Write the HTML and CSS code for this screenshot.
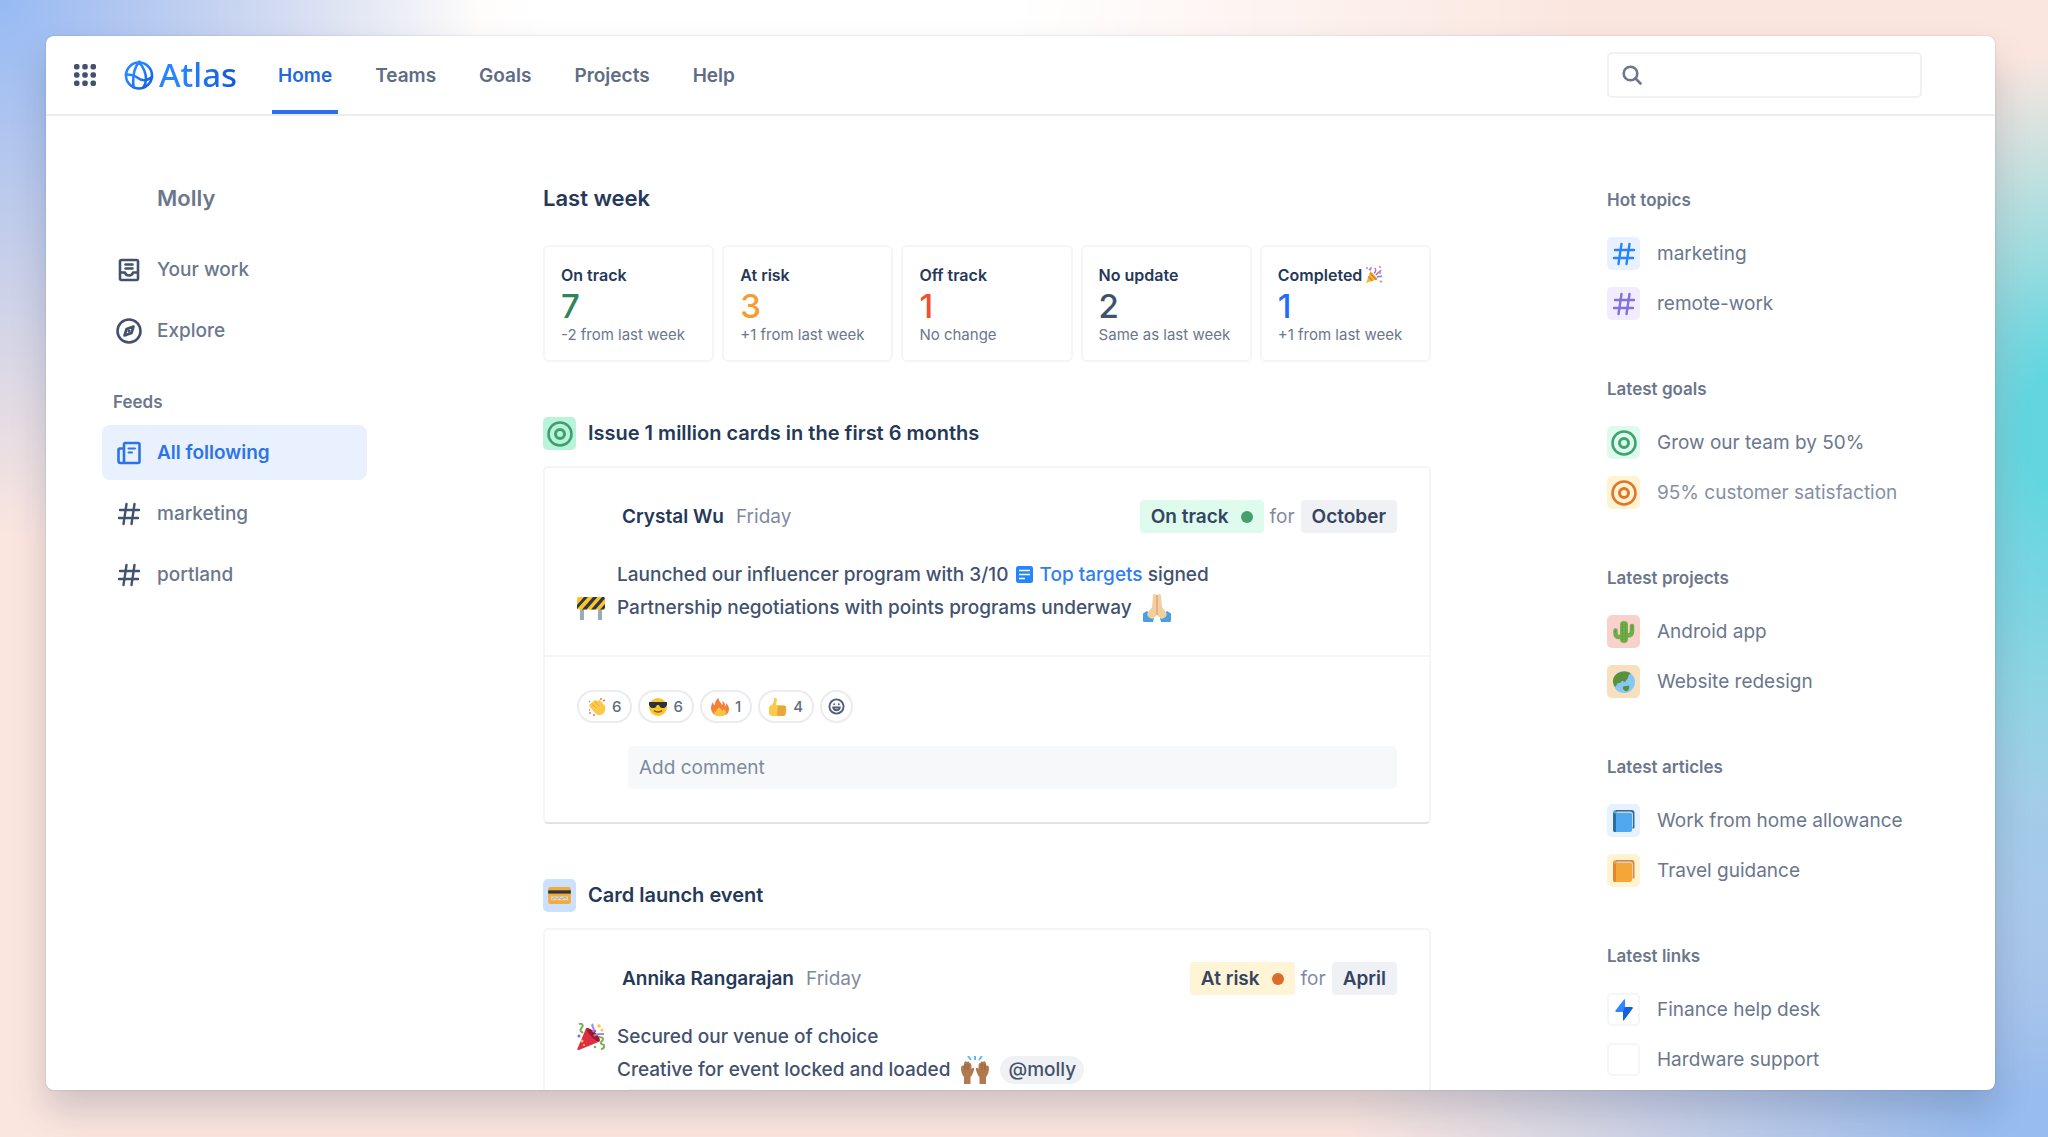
FILE: index.html
```html
<!DOCTYPE html>
<html lang="en">
<head>
    <meta charset="UTF-8">
    <meta name="viewport" content="width=device-width, initial-scale=1.0">
    <title>Atlas - Home</title>
    <link rel="stylesheet" href="styles.css">
</head>
<body>
    <!-- Shared icons -->
    <svg class="sprite" aria-hidden="true">
        <symbol id="icon-hash" viewBox="0 0 24 24">
            <path d="M9.5 2 6.5 22M17.500 2 14.500 22M3 8h19M2 16h19" fill="none" stroke="currentColor" stroke-width="2.4" stroke-linecap="round"/>
        </symbol>
        <symbol id="icon-goal" viewBox="0 0 26 26">
            <circle cx="13" cy="13" r="11.500" fill="none" stroke="currentColor" stroke-width="2.600"/>
            <circle cx="13" cy="13" r="4.500" fill="none" stroke="currentColor" stroke-width="3"/>
        </symbol>
        <symbol id="icon-book" viewBox="0 0 24 24">
            <path d="M4 1h15.500a3 3 0 0 1 3 3v15l-2 1V5H3V2z" fill="var(--cover-dark)"/>
            <path d="M4.500 2.500H18a3 3 0 0 1 3 3v12l-1 .5V5H4z" fill="#c9d3da"/>
            <path d="M1 3.500C1 2 2 1 3.500 1L4 4h14.500A1.500 1.500 0 0 1 20 5.500v15.500a2 2 0 0 1-2 2H3a2 2 0 0 1-2-2z" fill="var(--cover)"/>
            <path d="M1 3c0 1 1 1.500 3 1.500V23H3a2 2 0 0 1-2-2z" fill="var(--cover-dark)"/>
        </symbol>
    </svg>

    <div class="window">
        <header class="topbar">
            <button class="switcher" aria-label="Switch product">
                <svg width="22" height="22" viewBox="0 0 22 22" fill="#42526e">
                    <rect width="5.500" height="5.500" rx="2"/><rect x="8.250" width="5.500" height="5.500" rx="2"/><rect x="16.500" width="5.500" height="5.500" rx="2"/>
                    <rect y="8.250" width="5.500" height="5.500" rx="2"/><rect x="8.250" y="8.250" width="5.500" height="5.500" rx="2"/><rect x="16.500" y="8.250" width="5.500" height="5.500" rx="2"/>
                    <rect y="16.500" width="5.500" height="5.500" rx="2"/><rect x="8.250" y="16.500" width="5.500" height="5.500" rx="2"/><rect x="16.500" y="16.500" width="5.500" height="5.500" rx="2"/>
                </svg>
            </button>
            <a class="logo" href="#">
                <svg width="30" height="30" viewBox="0 0 30 30" fill="none" stroke="url(#logo-blue)" stroke-width="2.600" stroke-linecap="round" stroke-linejoin="round">
                    <defs>
                        <linearGradient id="logo-blue" x1="0" y1="0" x2="30" y2="30" gradientUnits="userSpaceOnUse">
                            <stop offset=".4" stop-color="#2684ff"/><stop offset="1" stop-color="#0f55d0"/>
                        </linearGradient>
                    </defs>
                    <circle cx="15" cy="15.500" r="13"/>
                    <path d="M15 2C10 8 8.500 17 9.500 27M15 2c5 6 7 12 7 17 0 3-1 6-2.500 8M2 14.500c6 0 9 1 12 3.500 4 3 9 3 14-1M14.500 2.500l1-.8"/>
                </svg>
                <span>Atlas</span>
            </a>
            <nav class="tabs">
                <a class="active" href="#">Home</a>
                <a href="#">Teams</a>
                <a href="#">Goals</a>
                <a href="#">Projects</a>
                <a href="#">Help</a>
            </nav>
            <label class="search">
                <svg width="20" height="20" viewBox="0 0 20 20" fill="none" stroke="#6b778c" stroke-width="2.600" stroke-linecap="round"><circle cx="8.500" cy="8.500" r="6.800"/><path d="m13.500 13.500 5 5"/></svg>
                <input type="search" aria-label="Search">
            </label>
        </header>

        <div class="content">
            <aside class="sidebar">
                <h2>Molly</h2>
                <a class="side-link" href="#">
                    <svg width="26" height="26" viewBox="0 0 26 26" fill="none" stroke="currentColor" stroke-width="2.600" stroke-linecap="round" stroke-linejoin="round"><rect x="4" y="3" width="18" height="20" rx="1.500"/><path d="M4.500 15.500H9c.5 2 2 3 4 3s3.500-1 4-3h4.500M9.500 7.500h7M9.500 11.500h7"/></svg>
                    Your work
                </a>
                <a class="side-link" href="#">
                    <svg width="26" height="26" viewBox="0 0 26 26" fill="none" stroke="currentColor" stroke-width="2.600" stroke-linejoin="round"><circle cx="13" cy="13" r="11.500"/><path d="m17.500 8.500-2 6.500-7 2.500 2-6.500z"/><path d="m14 12-2 2"/></svg>
                    Explore
                </a>
                <h3>Feeds</h3>
                <a class="side-link selected" href="#">
                    <svg width="26" height="26" viewBox="0 0 26 26" fill="none" stroke="currentColor" stroke-width="2.600" stroke-linecap="round" stroke-linejoin="round"><path d="M9 3h13a1.500 1.500 0 0 1 1.500 1.500v17A1.500 1.500 0 0 1 22 23H4.500A2 2 0 0 1 2.500 21V10A1.500 1.500 0 0 1 4 8.500h4M8 23V4.500A1.500 1.500 0 0 1 9.500 3"/><path d="M12.500 8.500h6.500M12.500 12.500h3.500" stroke-width="2"/></svg>
                    All following
                </a>
                <a class="side-link" href="#"><svg width="26" height="24"><use href="#icon-hash"/></svg>marketing</a>
                <a class="side-link" href="#"><svg width="26" height="24"><use href="#icon-hash"/></svg>portland</a>
            </aside>

            <main>
                <h1>Last week</h1>
                <div class="stats">
                    <div class="stat"><h4>On track</h4><strong class="green">7</strong><p>-2 from last week</p></div>
                    <div class="stat"><h4>At risk</h4><strong class="orange">3</strong><p>+1 from last week</p></div>
                    <div class="stat"><h4>Off track</h4><strong class="red">1</strong><p>No change</p></div>
                    <div class="stat"><h4>No update</h4><strong class="slate">2</strong><p>Same as last week</p></div>
                    <div class="stat">
                        <h4>Completed
                            <svg width="18" height="18" viewBox="0 0 18 18"><path d="M1 17 5.500 5l7.500 8z" fill="#f6b73c"/><path d="m3.500 10.500 4 4.500M5 7l6.500 7" stroke="#d9822b" stroke-width="1.500"/><path d="M9 7c2-1 2-3 1-5M11 9c2-3 4-3 5-5" stroke="#b06ed0" stroke-width="1.500" fill="none"/><path d="M12 11c2-1 3 0 5-1M4 3l2 1" stroke="#4c9aff" stroke-width="1.500"/><path d="M1 2h2M6 1v2M14 1h2M15 15l2 1M14 7h2" stroke="#f2778d" stroke-width="1.500"/></svg>
                        </h4>
                        <strong class="blue">1</strong><p>+1 from last week</p>
                    </div>
                </div>

                <section class="update">
                    <h2>
                        <span class="tile tile-mint"><svg width="26" height="26"><use href="#icon-goal"/></svg></span>
                        Issue 1 million cards in the first 6 months
                    </h2>
                    <article class="card">
                        <div class="card-main">
                            <div class="card-head">
                                <b>Crystal Wu</b><span class="muted">Friday</span>
                                <span class="status on-track">On track <i></i></span>
                                <span class="muted">for</span>
                                <span class="month">October</span>
                            </div>
                            <div class="line">
                                <span class="lead"></span>
                                <span>Launched our influencer program with 3/10
                                    <a href="#"><svg width="17" height="17" viewBox="0 0 17 17"><rect width="17" height="17" rx="2.500" fill="#2684ff"/><path d="M3 4.500h11M3 8.500h11M3 12.500h6" stroke="#fff" stroke-width="1.600"/></svg> Top targets</a> signed</span>
                            </div>
                            <div class="line">
                                <span class="lead">
                                    <svg width="28" height="28" viewBox="0 0 28 28"><path d="M3 14h4v12H3zM21 14h4v12h-4z" fill="#9aabb8"/><rect y="3" width="28" height="12.500" rx="1.500" fill="#fbc52f"/><path d="M0 11 7 3h4L0 15zM5 15.500 16 3h4.500L9.500 15.500zM14 15.500 25 3h2l1 1.500-9.500 11zM23 15.500l5-5.500v4l-1.500 1.500z" fill="#31373d"/></svg>
                                </span>
                                <span>Partnership negotiations with points programs underway</span>
                                <svg class="emoji" width="28" height="28" viewBox="0 0 28 28"><path d="M0 19.500 4 17l7 7-1 4H1.500A1.500 1.500 0 0 1 0 26zM28 19.500 24 17l-7 7 1 4h8.500a1.500 1.500 0 0 0 1.500-1.500z" fill="#4a9fe0"/><path d="M11.500 0 14 1l2.500-1c1 0 1.500 1 1.500 2l1 11 4.500 6c1 3-1.500 5-5 6L14 21l-4.500 4c-3.500-1-6-3-5-6L9 13l1-11c0-1 .5-2 1.500-2z" fill="#f3cfa0"/><path d="M14 1v20" stroke="#d9aa78" stroke-width="1.500"/></svg>
                            </div>
                        </div>
                        <div class="card-foot">
                            <div class="reactions">
                                <button>
                                    <svg width="18" height="18" viewBox="0 0 18 18"><path d="M2 6 7 2l2 1 3-1 5 6c1 3 0 6-2 8-3 2-6 1-8-1L2 9C1 8 1 7 2 6z" fill="#fbc84a"/><path d="m4 6 4 4M7 4l4 4" stroke="#eda93a" stroke-width="1"/><path d="M12 1h2M15 3l2-1M1 12h1M1 15h2M5 17h2M1 4l1-1" stroke="#ee7758" stroke-width="1.500"/></svg>6</button>
                                <button>
                                    <svg width="18" height="18" viewBox="0 0 18 18"><circle cx="9" cy="9" r="9" fill="#fbc52f"/><path d="M0 4h18v3c-1 1-1 3-4 3s-3-1-4-3H8c-1 2-1 3-4 3S1 8 0 7z" fill="#2c3338"/><path d="M5 12.500c2 2 6 2 8 0" stroke="#8a5a16" stroke-width="1.500" fill="none"/></svg>6</button>
                                <button>
                                    <svg width="18" height="18" viewBox="0 0 18 18"><path d="M9 18c-5 0-9-3-9-8 0-3 1-4 2-6 0 2 1 3 2 3C4 4 5 1 8 0c-1 3 2 4 3 7 1-1 1-2 0-4 3 1 3 3 3 5 1 0 1-1 1-3 2 2 3 4 3 6 0 5-4 7-9 7z" fill="#f4813b"/><path d="M9 18c-4 0-6-2-6-5l2 1c0-3 2-3 3-5 1 2 3 2 3 4 1 0 1-1 1-2 2 1 3 2 3 3 0 3-3 4-6 4z" fill="#fbc53f"/></svg>1</button>
                                <button>
                                    <svg width="18" height="18" viewBox="0 0 18 18"><path d="M1 8C3 7 5 5 5 1c0-2 3-1 3 1l-1 5h7c2 0 3 1 3 2v6c0 2-1 3-3 3H4c-2 0-4-1-4-3V10c0-1 0-2 1-2z" fill="#fbca4b"/><path d="M9 8h6c3 0 3 2 1 2.500 2 .5 2 2 0 2.500 2 .5 1 2-.5 2.500C17 16 16 18 14 18h-3c-2 0-3-1-3-2z" fill="#e9a63c"/></svg>4</button>
                                <button class="add" aria-label="Add reaction">
                                    <svg width="17" height="17" viewBox="0 0 18 18" fill="none" stroke="#505f79" stroke-width="2" stroke-linecap="round"><circle cx="9" cy="9" r="7.500"/><path d="M5.500 10c.5 4 6.500 4 7 0zM6.500 6.500v.2M11.500 6.500v.2"/></svg>
                                </button>
                            </div>
                            <input class="comment" type="text" placeholder="Add comment" aria-label="Add comment">
                        </div>
                    </article>
                </section>

                <section class="update">
                    <h2>
                        <span class="tile tile-sky">
                            <svg width="23" height="17" viewBox="0 0 24 18"><rect width="24" height="18" rx="2.500" fill="#f5ab3a"/><path d="M0 3.500h24V7H0z" fill="#31373d"/><path d="M3 10h18v4H3z" fill="#dfd8c8"/><path d="m4 13 3-2 2 2 3-2 2 2 3-2 3 1" stroke="#a7a9a6" fill="none"/></svg>
                        </span>
                        Card launch event
                    </h2>
                    <article class="card">
                        <div class="card-main">
                            <div class="card-head">
                                <b>Annika Rangarajan</b><span class="muted">Friday</span>
                                <span class="status at-risk">At risk <i></i></span>
                                <span class="muted">for</span>
                                <span class="month">April</span>
                            </div>
                            <div class="line">
                                <span class="lead">
                                    <svg width="28" height="28" viewBox="0 0 28 28"><path d="M9 5.500c1-1.500 6 1 10 5s4.500 7 3.500 8L2 27c-1.500.5-2-.5-1.500-1.500z" fill="#dd2e44"/><path d="M9.500 5.500c2-1 6 1.500 9 4.500s5 7 3.500 8.500c-3 0-12-8-12.500-13z" fill="#a0182f"/><path d="M2 1c3-1 5 1 2.500 4S5 9 6 10M22 14c4 0 5 2 3 4s-2 3 2 4c1 2-1 4-3 4" stroke="#77b255" stroke-width="2" fill="none"/><path d="M16 1c-3 3 3 3 0 8M17 13c2-3 5-2 10-2" stroke="#a58ad9" stroke-width="2" fill="none"/><g fill="#f7c948"><circle cx="22" cy="3" r="1.800"/><circle cx="25" cy="7" r="1.500"/><circle cx="5" cy="18" r="1.500"/><circle cx="7" cy="22" r="1"/></g><g fill="#8b5fd0"><circle cx="2" cy="13" r="1.500"/><circle cx="18" cy="8" r="1.200"/></g><circle cx="18" cy="24" r="1.300" fill="#77b255"/></svg>
                                </span>
                                <span>Secured our venue of choice</span>
                            </div>
                            <div class="line">
                                <span class="lead"></span>
                                <span>Creative for event locked and loaded</span>
                                <svg class="emoji" width="28" height="28" viewBox="0 0 28 28"><path d="m7 0 3 4M14 0v4M21 0l-3 4" stroke="#65b8f2" stroke-width="2"/><path d="M3 28v-7c-2-2-3-6-3-9 0-2 1.500-3 2.500-2l1-4c1-1 2-1 2.500 0 1-1 2.500-.5 2.500 1 2 0 2 2 2 6l1-1c1.500-1 2 .5 1.500 2-1 3-2 6-3.500 7v7zM25 28v-7c2-2 3-6 3-9 0-2-1.500-3-2.500-2l-1-4c-1-1-2-1-2.500 0-1-1-2.500-.5-2.500 1-2 0-2 2-2 6l-1-1c-1.500-1-2 .5-1.500 2 1 3 2 6 3.500 7v7z" fill="#b07a4e"/><path d="M4 8v6M7 8v6M24 8v6M21 8v6" stroke="#8d5c38" stroke-width=".8"/></svg>
                                <a class="mention" href="#">@molly</a>
                            </div>
                            <div class="attachment"></div>
                        </div>
                    </article>
                </section>
            </main>

            <aside class="rail">
                <section>
                    <h3>Hot topics</h3>
                    <a href="#"><span class="tile tile-blue"><svg width="24" height="24"><use href="#icon-hash"/></svg></span>marketing</a>
                    <a href="#"><span class="tile tile-purple"><svg width="24" height="24"><use href="#icon-hash"/></svg></span>remote-work</a>
                </section>
                <section>
                    <h3>Latest goals</h3>
                    <a href="#"><span class="tile tile-green"><svg width="26" height="26"><use href="#icon-goal"/></svg></span>Grow our team by 50%</a>
                    <a class="light" href="#"><span class="tile tile-yellow"><svg width="26" height="26"><use href="#icon-goal"/></svg></span>95% customer satisfaction</a>
                </section>
                <section>
                    <h3>Latest projects</h3>
                    <a href="#"><span class="tile tile-pink">
                        <svg width="22" height="22" viewBox="0 0 22 22" fill="none" stroke="#6fae48" stroke-linecap="round"><path d="M11 4v14" stroke-width="8"/><path d="M2.500 9.500v3q0 3.500 4 3.500H9M19 5v5q0 4.500-4 4.500h-2" stroke-width="4.500"/><path d="M9.500 3v16M12.500 3v16M2.500 10v2M19 5v5" stroke="#4e8a32" stroke-width=".8" stroke-dasharray="1 2"/></svg>
                    </span>Android app</a>
                    <a href="#"><span class="tile tile-peach">
                        <svg width="22" height="22" viewBox="0 0 22 22"><circle cx="11" cy="11" r="11" fill="#86c8f5"/><path d="M3.500 3C7 0 13-.500 17.500 2c-1 1 0 1.500-2 2 .5 2-1 2-1 4-1 0-1.500 3-3 3-1 0-1-1.500-2.500-1-1 .5-1 2.500-3 2-1.500-.5-2 1-3 3-.5 1-2 0-2-1C-1 10 0 6 3.500 3zM10 16c1-2 4-.5 6-1.500.5 2 0 4-1.500 5.500-2 .5-3 0-3.500-1-1-.5-1.500-1.500-1-3z" fill="#5c913b"/></svg>
                    </span>Website redesign</a>
                </section>
                <section>
                    <h3>Latest articles</h3>
                    <a href="#"><span class="tile tile-blue book-blue"><svg width="24" height="24"><use href="#icon-book"/></svg></span>Work from home allowance</a>
                    <a href="#"><span class="tile tile-yellow book-orange"><svg width="24" height="24"><use href="#icon-book"/></svg></span>Travel guidance</a>
                </section>
                <section>
                    <h3>Latest links</h3>
                    <a href="#"><span class="tile tile-outline">
                        <svg width="18" height="22" viewBox="0 0 18 22"><path d="M10 1v7h6.500c1 0 1.500 1 1 1.500L9 21c-.5.800-1 .5-1-.500V13H1.500C.5 13 0 12 .5 11.500L9 .500c.5-.5 1-.5 1 .5z" fill="#2f88ff"/><path d="M10 8h6.500c1 0 1.500 1 1 1.500L9 21c-.5.800-1 .5-1-.500V13z" fill="#1262e0"/></svg>
                    </span>Finance help desk</a>
                    <a href="#"><span class="tile tile-outline"></span>Hardware support</a>
                </section>
            </aside>
        </div>
    </div>
</body>
</html>
```
FILE: styles.css
```css
/* General */
* {
    box-sizing: border-box;
}

body {
    margin: 0;
    height: 100vh;
    padding: 36px 53px 47px 46px;
    overflow: hidden;
    font-family: Inter, "Liberation Sans", sans-serif;
    font-size: 19px;
    color: #6b778c;
    background:
        radial-gradient(ellipse 480px 540px at 0 0, #97baf4, rgba(157, 191, 245, 0) 100%),
        radial-gradient(ellipse 160px 380px at 100% 38%, #62d6df 15%, rgba(98, 214, 223, 0) 100%),
        radial-gradient(ellipse 700px 460px at 100% 100%, #98bcee 10%, rgba(155, 190, 238, 0) 100%),
        radial-gradient(ellipse 240px 440px at 100% 62%, #a9d4e6 30%, rgba(169, 212, 230, 0) 100%),
        radial-gradient(ellipse 800px 500px at 38% 0, #fff 30%, rgba(255, 255, 255, 0) 100%),
        #fbe6df;
}

h1, h2, h3, h4, p {
    margin: 0;
}

a {
    color: inherit;
    text-decoration: none;
}

button {
    font-family: inherit;
    background: none;
    border: 0;
    padding: 0;
    cursor: pointer;
}

.sprite {
    position: absolute;
    width: 0;
    height: 0;
}

.window {
    height: 100%;
    background: #fff;
    border-radius: 8px;
    overflow: hidden;
    box-shadow: 0 0 2px rgba(9, 30, 66, 0.2), 0 20px 36px rgba(9, 30, 66, 0.18);
}

/* Top bar */
.topbar {
    display: flex;
    align-items: center;
    height: 80px;
    padding: 0 73px 0 28px;
    border-bottom: 2px solid #ebecf0;
}

.switcher {
    display: flex;
}

.logo {
    display: flex;
    align-items: center;
    gap: 5px;
    margin: 0 35px 0 28px;
}

.logo span {
    font-family: "Noto Sans", sans-serif;
    font-size: 33px;
    line-height: 40px;
    font-weight: 500;
    background: linear-gradient(90deg, #2684ff 30%, #1259d6);
    background-clip: text;
    -webkit-background-clip: text;
    color: transparent;
}

.tabs {
    display: flex;
    align-self: stretch;
    gap: 31px;
    flex: 1;
}

.tabs a {
    display: flex;
    align-items: center;
    padding: 4px 6px 0;
    font-weight: 600;
    color: #5e6c84;
    border-bottom: 4px solid transparent;
}

.tabs .active {
    color: #2468dc;
    border-color: #2a70ea;
}

.search {
    display: flex;
    align-items: center;
    width: 315px;
    height: 46px;
    padding: 0 13px;
    border: 2px solid #f0f1f4;
    border-radius: 5px;
}

.search input {
    flex: 1;
    min-width: 0;
    border: 0;
    outline: none;
    font: inherit;
}

/* Three column layout */
.content {
    display: grid;
    grid-template-columns: 265px minmax(0, 1fr) 315px;
    column-gap: 176px;
    padding: 70px 73px 0 56px;
}

/* Sidebar */
.sidebar {
    display: flex;
    flex-direction: column;
    gap: 6px;
    font-weight: 500;
}

.sidebar h2 {
    padding-left: 55px;
    margin-bottom: 26px;
    font-size: 22px;
    line-height: 24px;
    font-weight: 600;
}

.sidebar h3 {
    padding-left: 11px;
    margin: 26px 0 5px;
}

.sidebar h3, .rail h3 {
    font-size: 17px;
    line-height: 24px;
    font-weight: 600;
}

.side-link {
    display: flex;
    align-items: center;
    gap: 15px;
    height: 55px;
    padding-left: 14px;
    border-radius: 8px;
}

.side-link svg {
    color: #42526e;
}

.side-link.selected {
    background: #e9f1ff;
    color: #2b74e8;
    font-weight: 600;
}

.side-link.selected svg {
    color: #2b74e8;
}

/* Stats */
main h1 {
    margin-bottom: 35px;
    font-size: 22px;
    line-height: 24px;
    font-weight: 600;
    color: #253858;
}

.stats {
    display: flex;
    gap: 8px;
}

.stat {
    flex: 1;
    padding: 17px 0 16px 16px;
    border: 2px solid #f4f5f7;
    border-radius: 6px;
    white-space: nowrap;
}

.stat h4 {
    display: flex;
    align-items: center;
    gap: 3px;
    font-size: 16px;
    line-height: 22px;
    font-weight: 600;
    color: #253858;
}

.stat strong {
    display: block;
    font-size: 33px;
    line-height: 40px;
    font-weight: 500;
}

.stat p {
    font-size: 15px;
    line-height: 18px;
}

.green { color: #2f855a; }
.orange { color: #f79c2d; }
.red { color: #f0502d; }
.slate { color: #42526e; }
.blue { color: #216bff; }

/* Icon tiles */
.tile {
    display: flex;
    flex-shrink: 0;
    align-items: center;
    justify-content: center;
    width: 33px;
    height: 33px;
    border-radius: 5px;
}

.tile-mint { background: #b9f4da; color: #3ea071; }
.tile-green { background: #defbee; color: #3fa372; }
.tile-yellow { background: #fff4d2; color: #e0762b; }
.tile-sky { background: #cce0ff; }
.tile-blue { background: #e8f1ff; color: #2684ff; }
.tile-purple { background: #f1edfe; color: #8270db; }
.tile-pink { background: #f8d1cb; }
.tile-peach { background: #f8dfbd; }
.tile-outline { border: 2px solid #f5f6f8; }
.book-blue { --cover: #50a9ee; --cover-dark: #2c6f9f; }
.book-orange { --cover: #f4a737; --cover-dark: #e88430; }

/* Update cards */
.update {
    margin-top: 55px;
}

.update h2 {
    display: flex;
    align-items: center;
    gap: 12px;
    margin-bottom: 16px;
    font-size: 20px;
    line-height: 33px;
    font-weight: 600;
    color: #253858;
}

.card {
    border: 2px solid #f4f5f7;
    border-bottom-color: #dfe2e7;
    border-radius: 5px;
}

.card-main {
    padding: 32px 32px 31px;
    color: #42526e;
}

.card-head {
    display: flex;
    align-items: center;
    gap: 6px;
    height: 33px;
    margin-bottom: 25px;
    padding-left: 45px;
}

.card-head b {
    margin-right: 6px;
    font-weight: 600;
    color: #253858;
}

.muted {
    color: #7f8aa0;
}

.status, .month {
    display: flex;
    align-items: center;
    height: 33px;
    padding: 0 11px;
    border-radius: 4px;
    font-weight: 600;
    color: #344563;
    background: #f0f1f4;
}

.status {
    gap: 12px;
    margin-left: auto;
}

.status i {
    width: 12px;
    height: 12px;
    border-radius: 50%;
}

.on-track { background: #defbee; }
.on-track i { background: #45a06e; }
.at-risk { background: #fff4d6; }
.at-risk i { background: #dd6e29; }

.line {
    display: flex;
    align-items: center;
    height: 33px;
    font-weight: 500;
}

.lead {
    display: flex;
    width: 40px;
}

.line a {
    color: #2f7ff0;
}

.line a svg {
    margin: 0 2px;
    vertical-align: -2px;
}

.emoji {
    margin: 0 11px;
}

.line .mention {
    height: 28px;
    padding: 0 8px;
    line-height: 28px;
    border-radius: 14px;
    color: #42526e;
    background: #f0f1f4;
}

.attachment {
    width: 146px;
    height: 28px;
    margin: 3px 0 0 40px;
    border-radius: 14px;
    background: #f4f5f7;
}

.card-foot {
    padding: 33px 32px;
    border-top: 2px solid #f4f5f7;
}

.reactions {
    display: flex;
    gap: 6px;
    margin-bottom: 23px;
}

.reactions button {
    display: flex;
    align-items: center;
    gap: 6px;
    height: 33px;
    padding: 0 9px;
    border: 2px solid #ebecf0;
    border-radius: 17px;
    font-size: 15px;
    font-weight: 500;
    color: #5e6c84;
}

.reactions .add {
    padding: 0 6px;
}

.comment {
    display: block;
    width: calc(100% - 51px);
    height: 43px;
    margin-left: 51px;
    padding: 0 11px;
    border: 0;
    border-radius: 5px;
    background: #f7f8fa;
    font: inherit;
}

.comment::placeholder {
    color: #7f8aa0;
    opacity: 1;
}

/* Right rail */
.rail {
    display: flex;
    flex-direction: column;
    gap: 57px;
    padding-top: 2px;
}

.rail section {
    display: flex;
    flex-direction: column;
    gap: 17px;
}

.rail h3 {
    margin-bottom: 8px;
}

.rail a {
    display: flex;
    align-items: center;
    gap: 17px;
}

.rail .light {
    color: #8590a5;
}
```
